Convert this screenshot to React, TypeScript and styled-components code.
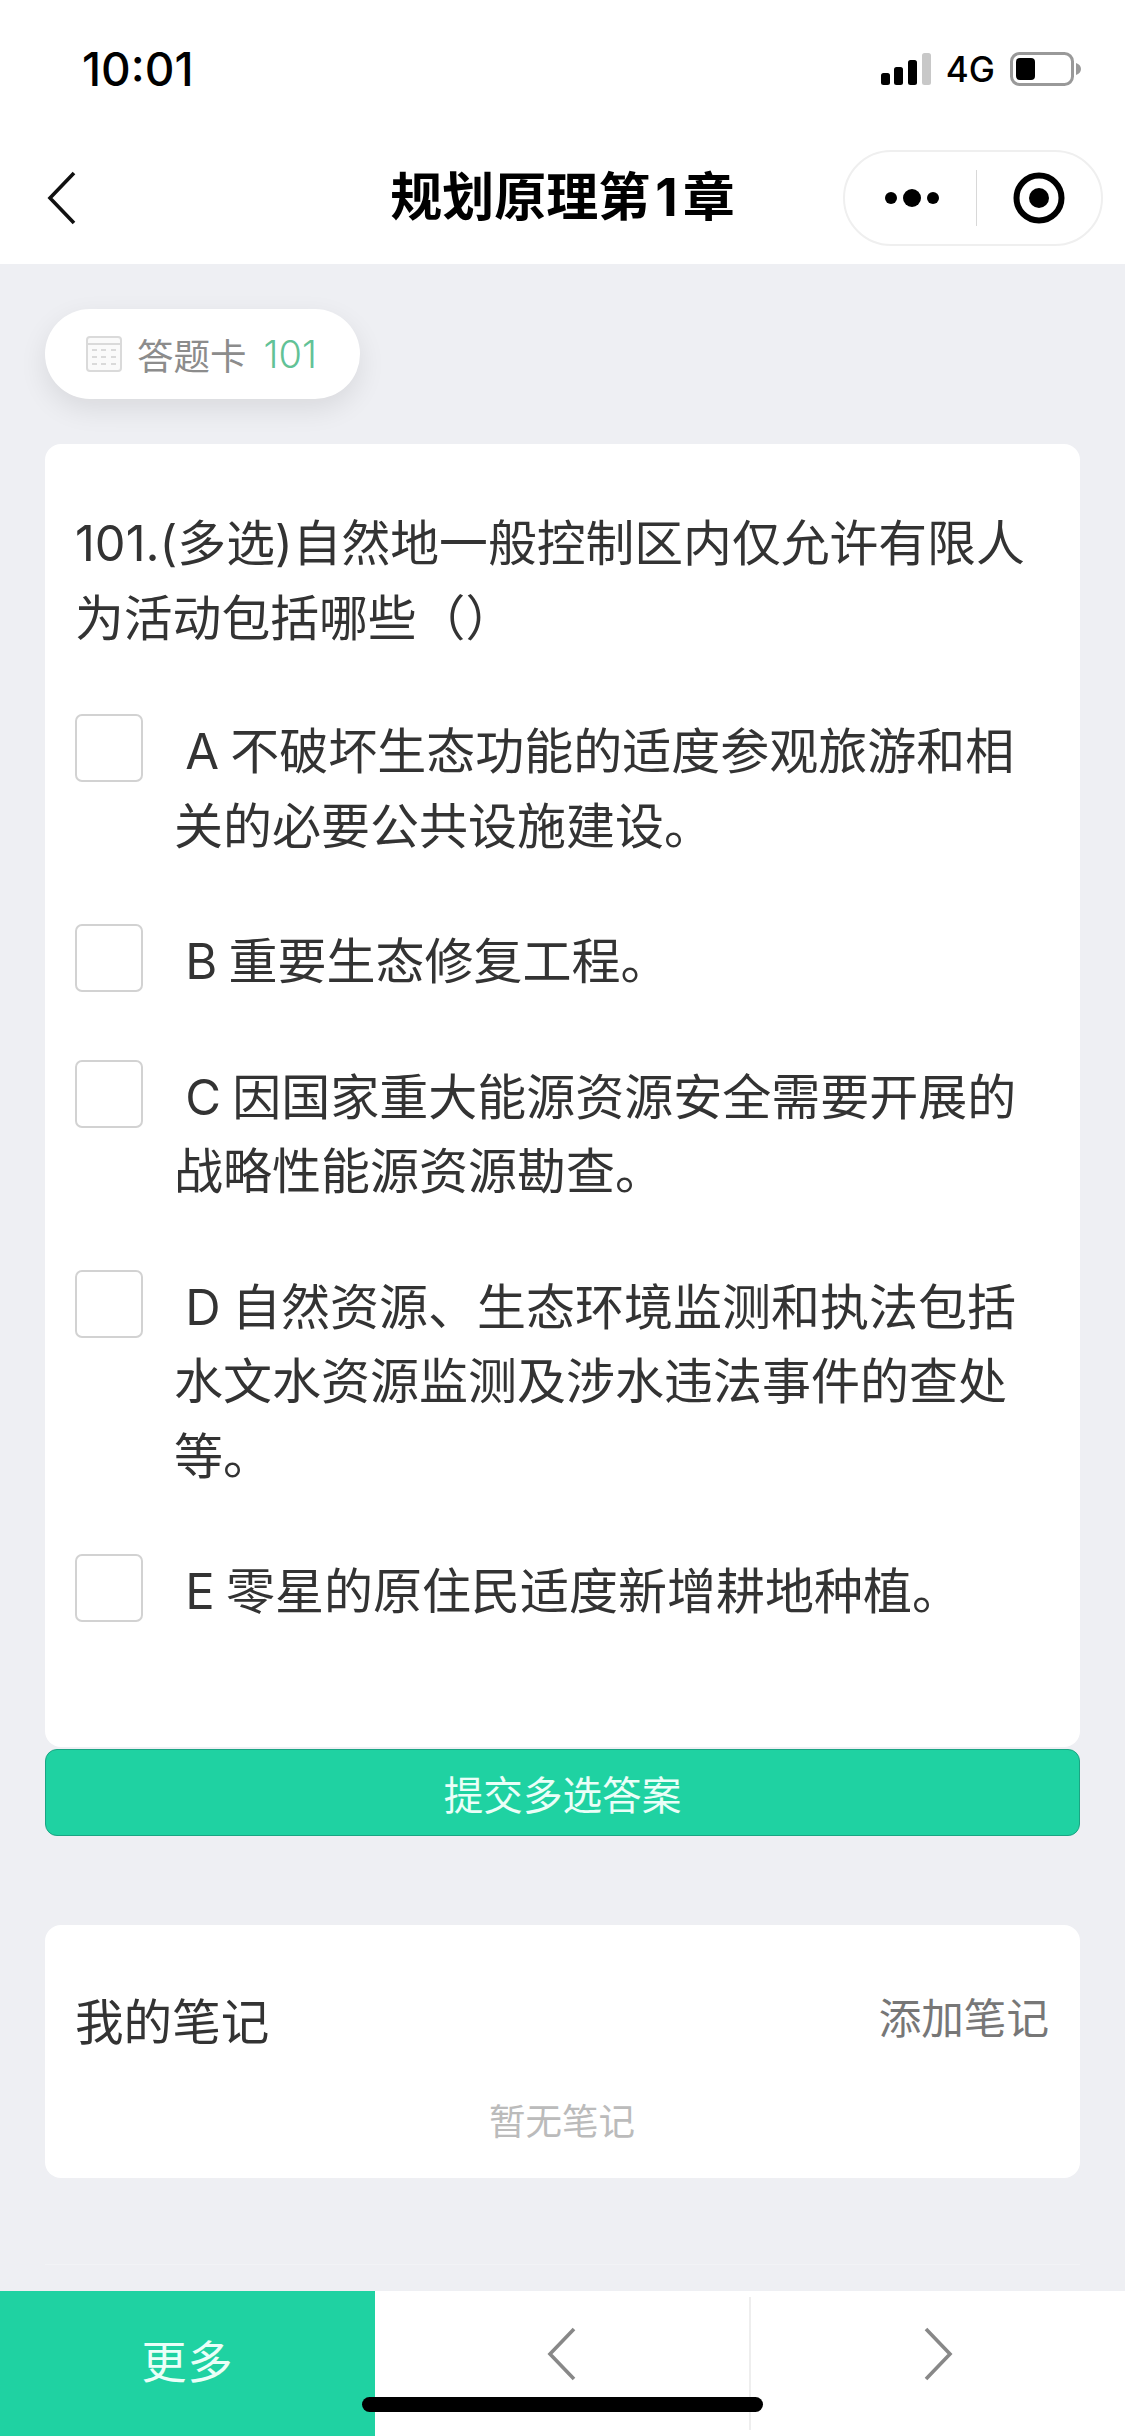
import React from 'react'
import styled, { createGlobalStyle } from 'styled-components'

const GREEN = '#1fd2a2'
const BASE_FONT = `Inter, 'Noto Sans CJK SC', sans-serif`

const options = [
  { key: 'A', text: '不破坏生态功能的适度参观旅游和相关的必要公共设施建设。' },
  { key: 'B', text: '重要生态修复工程。' },
  { key: 'C', text: '因国家重大能源资源安全需要开展的战略性能源资源勘查。' },
  { key: 'D', text: '自然资源、生态环境监测和执法包括水文水资源监测及涉水违法事件的查处等。' },
  { key: 'E', text: '零星的原住民适度新增耕地种植。' },
]

const Chevron = ({ dir }: { dir: 'left' | 'right' }) => (
  <svg width="30" height="54" viewBox="0 0 30 54" fill="none">
    <path
      d={dir === 'left' ? 'M27 2 3 27l24 25' : 'M3 2l24 25L3 52'}
      stroke="currentColor"
      strokeWidth="3.6"
    />
  </svg>
)

export default function App() {
  return (
    <Page>
      <GlobalStyle />
      <StatusBar>
        <Clock>10:01</Clock>
        <StatusRight>
          <svg width="50" height="32" viewBox="0 0 50 32">
            <rect x="0" y="20" width="9" height="12" rx="2.5" fill="#000" />
            <rect x="13" y="14" width="9" height="18" rx="2.5" fill="#000" />
            <rect x="27" y="7" width="9" height="25" rx="2.5" fill="#000" />
            <rect x="41" y="0" width="9" height="32" rx="2.5" fill="#c8c8c8" />
          </svg>
          <Network>4G</Network>
          <svg width="71" height="34" viewBox="0 0 71 34">
            <rect x="1.5" y="1.5" width="61" height="31" rx="8" fill="none" stroke="#999" strokeWidth="3" />
            <rect x="6" y="6" width="19" height="22" rx="4" fill="#000" />
            <path d="M66 11c3 1 5 3 5 6s-2 5-5 6z" fill="#999" />
          </svg>
        </StatusRight>
      </StatusBar>

      <NavBar>
        <BackButton>
          <Chevron dir="left" />
        </BackButton>
        <NavTitle>
          规划原理第<TitleNumber>1</TitleNumber>章
        </NavTitle>
        <Capsule>
          <svg width="56" height="20" viewBox="0 0 56 20">
            <circle cx="7" cy="10" r="6" fill="#000" />
            <circle cx="28" cy="10" r="9" fill="#000" />
            <circle cx="49" cy="10" r="6" fill="#000" />
          </svg>
          <CapsuleDivider />
          <svg width="52" height="52" viewBox="0 0 52 52">
            <circle cx="26" cy="26" r="22.5" fill="none" stroke="#000" strokeWidth="6" />
            <circle cx="26" cy="26" r="10" fill="#000" />
          </svg>
        </Capsule>
      </NavBar>

      <Content>
        <CardPill>
          <svg width="36" height="36" viewBox="0 0 36 36">
            <rect x="1" y="1" width="34" height="34" rx="3" fill="#fafafa" stroke="#dadada" strokeWidth="2" />
            <path
              d="M1 8h34M6 14h5M15 14h5M25 14h5M6 21h5M15 21h5M25 21h5M6 28h5M15 28h5M25 28h5"
              stroke="#dadada"
              strokeWidth="2"
            />
          </svg>
          <PillLabel>答题卡</PillLabel>
          <PillCount>101</PillCount>
        </CardPill>

        <QuestionCard>
          <Question>101.(多选)自然地一般控制区内仅允许有限人为活动包括哪些（）</Question>
          <OptionList>
            {options.map(o => (
              <OptionRow key={o.key}>
                <CheckBox />
                <OptionText>{`\u00a0${o.key} ${o.text}`}</OptionText>
              </OptionRow>
            ))}
          </OptionList>
        </QuestionCard>

        <SubmitButton>提交多选答案</SubmitButton>

        <NoteCard>
          <NoteHeader>
            <NoteTitle>我的笔记</NoteTitle>
            <NoteAdd>添加笔记</NoteAdd>
          </NoteHeader>
          <NoteEmpty>暂无笔记</NoteEmpty>
        </NoteCard>

        <FaintRule />
      </Content>

      <BottomBar>
        <MoreTab>更多</MoreTab>
        <ArrowTab>
          <Chevron dir="left" />
        </ArrowTab>
        <ArrowTab $divided>
          <Chevron dir="right" />
        </ArrowTab>
      </BottomBar>
      <HomeIndicator />
    </Page>
  )
}

const GlobalStyle = createGlobalStyle`
  html, body {
    margin: 0;
    padding: 0;
    background: #eeeff3;
  }
`

const Page = styled.div`
  position: relative;
  width: 1125px;
  height: 2436px;
  overflow: hidden;
  display: flex;
  flex-direction: column;
  background: #eeeff3;
  font-family: ${BASE_FONT};
`

const StatusBar = styled.div`
  height: 138px;
  flex: 0 0 auto;
  display: flex;
  justify-content: space-between;
  align-items: center;
  padding: 0 44px 0 82px;
  box-sizing: border-box;
  background: #fff;
`

const Clock = styled.span`
  font-size: 46px;
  font-weight: 500;
  color: #000;
`

const StatusRight = styled.div`
  display: flex;
  align-items: center;
  gap: 15px;
`

const Network = styled.span`
  font-size: 35px;
  font-weight: 500;
  color: #000;
`

const NavBar = styled.div`
  position: relative;
  height: 126px;
  flex: 0 0 auto;
  display: flex;
  align-items: center;
  justify-content: center;
  background: #fff;
`

const BackButton = styled.div`
  position: absolute;
  left: 47px;
  top: 33px;
  color: #111;
  line-height: 0;
`

const NavTitle = styled.div`
  font-size: 52px;
  font-weight: 700;
  color: #000;
  line-height: 120px;
  transform: translateY(-3px);
`

const TitleNumber = styled.span`
  margin: 0 5px;
`

const Capsule = styled.div`
  position: absolute;
  left: 843px;
  top: 12px;
  width: 260px;
  height: 96px;
  box-sizing: border-box;
  display: flex;
  align-items: center;
  padding: 0 36px 0 39px;
  justify-content: space-between;
  border: 2px solid #efefef;
  border-radius: 48px;
  background: #fff;
`

const CapsuleDivider = styled.div`
  width: 1px;
  height: 56px;
  background: #d8d8d8;
`

const Content = styled.div`
  flex: 1;
  display: flex;
  flex-direction: column;
  align-items: stretch;
  padding: 45px 45px 0;
  min-height: 0;
`

const CardPill = styled.div`
  align-self: flex-start;
  width: 315px;
  height: 90px;
  box-sizing: border-box;
  padding-left: 41px;
  display: flex;
  align-items: center;
  border-radius: 45px;
  background: #fff;
  box-shadow: 0 10px 28px rgba(0, 0, 0, 0.09);
`

const PillLabel = styled.span`
  margin-left: 15px;
  font-size: 36.5px;
  font-weight: 400;
  color: #8c8c8c;
`

const PillCount = styled.span`
  margin-left: 17px;
  font-size: 38px;
  font-weight: 300;
  color: #62c296;
`

const QuestionCard = styled.div`
  margin-top: 45px;
  height: 1303px;
  box-sizing: border-box;
  padding: 63px 30px 0;
  border-radius: 16px;
  background: #fff;
`

const Question = styled.div`
  font-size: 48.8px;
  font-weight: 400;
  line-height: 74.5px;
  color: #333;
`

const OptionList = styled.div`
  margin-top: 58px;
  display: flex;
  flex-direction: column;
  gap: 61px;
`

const OptionRow = styled.div`
  display: flex;
  align-items: flex-start;
  gap: 31px;
`

const CheckBox = styled.div`
  flex: 0 0 auto;
  width: 68px;
  height: 68px;
  box-sizing: border-box;
  border: 2px solid #d2d2d2;
  border-radius: 7px;
  background: #fff;
`

const OptionText = styled.div`
  flex: 1;
  margin-top: 1px;
  margin-bottom: -1px;
  font-size: 49px;
  font-weight: 400;
  line-height: 74.5px;
  word-spacing: -2.5px;
  color: #333;
`

const SubmitButton = styled.div`
  margin-top: 2px;
  height: 87px;
  box-sizing: border-box;
  display: flex;
  align-items: center;
  justify-content: center;
  border: 1.5px solid #1aa583;
  border-radius: 12px;
  background: ${GREEN};
  font-size: 39.6px;
  font-weight: 400;
  color: #eafff8;
`

const NoteCard = styled.div`
  margin-top: 89px;
  height: 253px;
  box-sizing: border-box;
  padding: 58px 31px 0 30px;
  border-radius: 16px;
  background: #fff;
`

const NoteHeader = styled.div`
  display: flex;
  justify-content: space-between;
  align-items: flex-start;
`

const NoteTitle = styled.div`
  font-size: 48.6px;
  font-weight: 400;
  line-height: 80px;
  color: #333;
`

const NoteAdd = styled.div`
  font-size: 42.6px;
  font-weight: 400;
  line-height: 72px;
  color: #777;
`

const NoteEmpty = styled.div`
  margin-top: 29px;
  text-align: center;
  font-size: 36.5px;
  font-weight: 400;
  line-height: 60px;
  color: #bbb;
`

const FaintRule = styled.div`
  margin-top: 86px;
  height: 1px;
  background: #f2f3f6;
`

const BottomBar = styled.div`
  height: 145px;
  flex: 0 0 auto;
  display: flex;
  background: #fff;
`

const MoreTab = styled.div`
  width: 375px;
  padding-bottom: 8px;
  box-sizing: border-box;
  display: flex;
  align-items: center;
  justify-content: center;
  background: ${GREEN};
  font-size: 45px;
  font-weight: 400;
  letter-spacing: 1px;
  color: #eafff8;
`

const ArrowTab = styled.div<{ $divided?: boolean }>`
  flex: 1;
  margin: 6px 0 6px;
  padding-bottom: 20px;
  display: flex;
  align-items: center;
  justify-content: center;
  color: #888;
  border-left: ${p => (p.$divided ? '2px solid #eeeeee' : 'none')};
`

const HomeIndicator = styled.div`
  position: absolute;
  left: 362px;
  top: 2397px;
  width: 401px;
  height: 15px;
  border-radius: 8px;
  background: #000;
`
